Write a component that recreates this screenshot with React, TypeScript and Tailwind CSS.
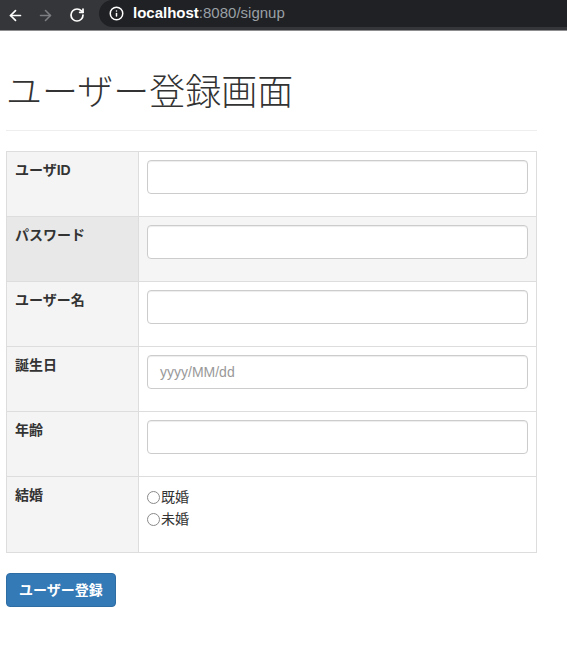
import React from "react";
import { ArrowLeft, ArrowRight, RotateCw, Info } from "lucide-react";

const font = { fontFamily: '"Liberation Sans", "Noto Sans CJK JP", sans-serif' };

function Row({ label, hover, children, last }: { label: string; hover?: boolean; children: React.ReactNode; last?: boolean }) {
  return (
    <tr className={last ? "" : "border-b border-[#ddd]"}>
      <th className={`w-[132px] border-r border-[#ddd] p-2 text-left align-top text-[14px] font-bold leading-[20px] text-[#333] ${hover ? "bg-[#e8e8e8]" : "bg-[#f4f4f4]"}`}>
        {label}
      </th>
      <td className={`p-2 align-top ${hover ? "bg-[#f5f5f5]" : "bg-white"}`}>{children}</td>
    </tr>
  );
}

function Input({ placeholder }: { placeholder?: string }) {
  return (
    <div className="mb-[14px] flex h-[34px] items-center rounded-[4px] border border-[#ccc] bg-white px-3 text-[14px] text-[#999] shadow-[inset_0_1px_1px_rgba(0,0,0,0.075)]">
      {placeholder}
    </div>
  );
}

function Radio({ label }: { label: string }) {
  return (
    <div className="flex h-[22px] items-center text-[14px] text-[#333]">
      <span className="mr-[1px] inline-block h-[13px] w-[13px] rounded-full border border-[#8a8a8a] bg-white" />
      {label}
    </div>
  );
}

export default function App() {
  return (
    <div className="min-h-[645px] w-[567px] bg-white" style={font}>
      <div className="flex h-[31px] items-center border-b border-[#8d8d8d] bg-[#35363a]">
        <ArrowLeft className="ml-[7px] h-[17px] w-[17px] text-white" strokeWidth={2.4} />
        <ArrowRight className="ml-[13px] h-[17px] w-[17px] text-[#7d7e82]" strokeWidth={2.2} />
        <RotateCw className="ml-[15px] h-[16px] w-[16px] text-white" strokeWidth={2.6} />
        <div className="ml-[14px] flex h-[27px] flex-1 items-center self-start rounded-l-full bg-[#202124] pl-[10px]">
          <Info className="h-[15px] w-[15px] text-white" strokeWidth={2.4} />
          <span className="ml-[9px] text-[15px] font-semibold text-white">localhost</span>
          <span className="text-[15px] text-[#9aa0a6]">:8080/signup</span>
        </div>
      </div>
      <div className="ml-[6px] w-[531px]">
        <h1 className="mt-[42px] border-b border-[#eee] pb-[17px] text-[36px] font-light leading-[40px] text-[#333]">
          ユーザー登録画面
        </h1>
        <table className="mt-[20px] w-full border-collapse border border-[#ddd]">
          <tbody>
            <Row label="ユーザID">
              <Input />
            </Row>
            <Row label="パスワード" hover>
              <Input />
            </Row>
            <Row label="ユーザー名">
              <Input />
            </Row>
            <Row label="誕生日">
              <Input placeholder="yyyy/MM/dd" />
            </Row>
            <Row label="年齢">
              <Input />
            </Row>
            <Row label="結婚" last>
              <div className="mb-[14px] pt-[1px]">
                <Radio label="既婚" />
                <Radio label="未婚" />
              </div>
            </Row>
          </tbody>
        </table>
        <button className="mt-[20px] h-[34px] rounded-[4px] border border-[#2e6da4] bg-[#337ab7] px-3 text-[14px] font-bold text-white">
          ユーザー登録
        </button>
      </div>
    </div>
  );
}
